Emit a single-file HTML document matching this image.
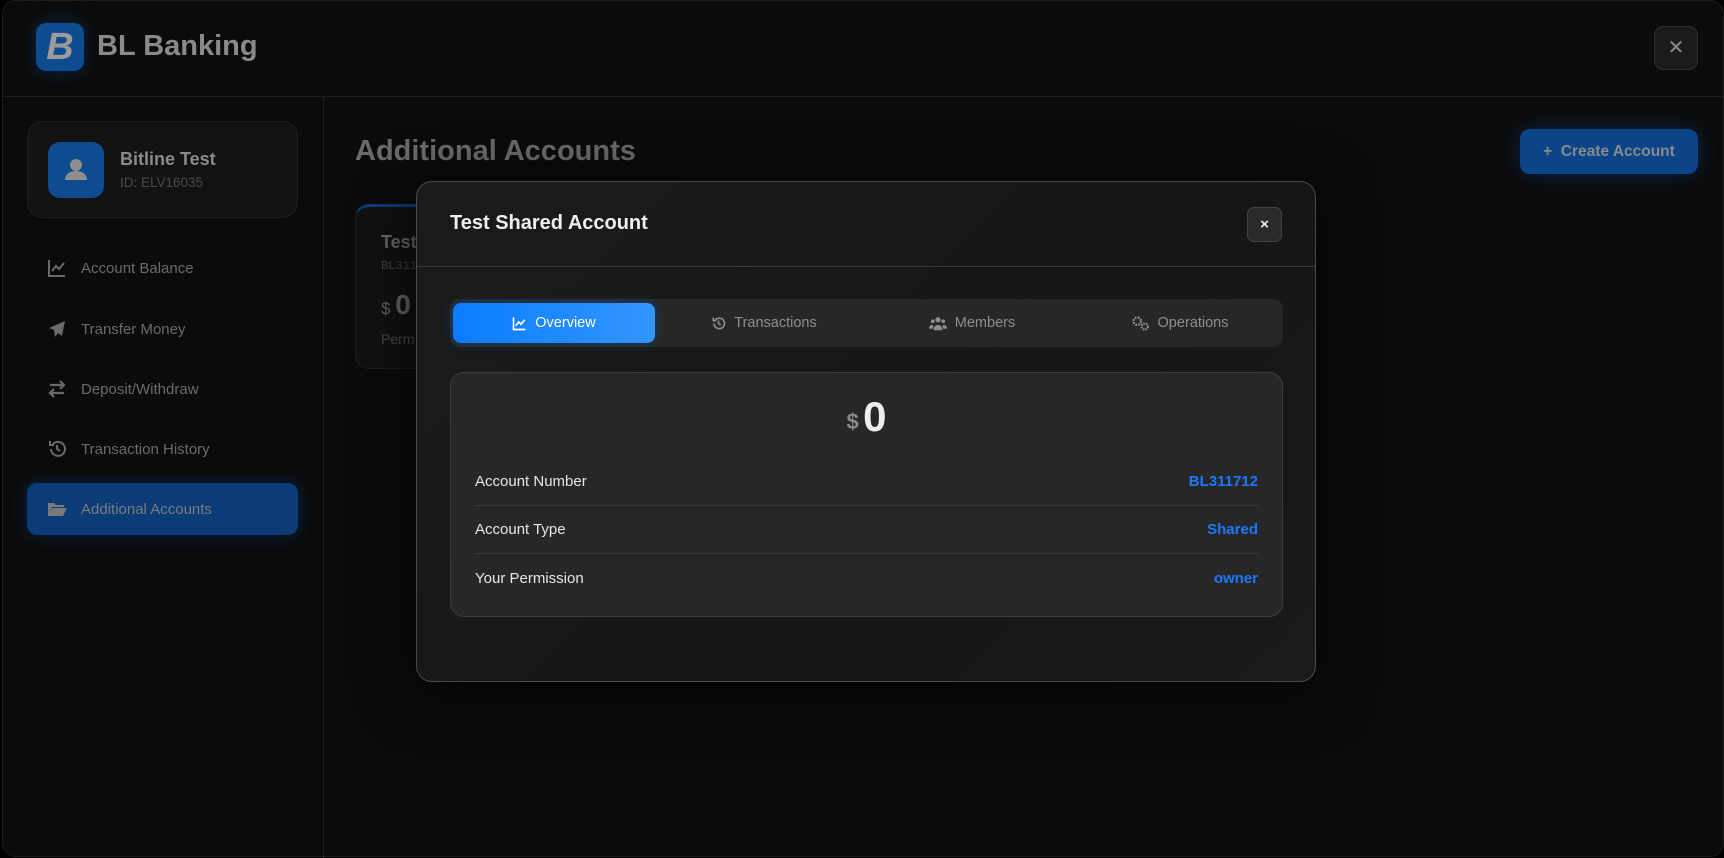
<!DOCTYPE html>
<html><head><meta charset="utf-8"><style>
*{box-sizing:border-box;margin:0;padding:0}
body{width:1724px;height:857px;background:#000;font-family:"Liberation Sans",sans-serif;position:relative;overflow:hidden}
.app{position:absolute;left:2px;top:0;width:1722px;height:857px;background:#0b0b0b;border-radius:14px;border:1px solid #1c1c1c}
.abs{position:absolute}
.hdr{left:0;top:0;width:1722px;height:96px;border-bottom:1px solid #1e1e1e}
.side{left:0;top:96px;width:321px;height:761px;border-right:1px solid #1e1e1e}
.nav{position:absolute;left:44px;font-size:15px;color:#6a6a6a;display:flex;align-items:center;gap:14px}
.nav svg{width:20px;height:20px}
.modal{left:413px;top:180px;width:900px;height:501px;border-radius:16px;border:1px solid #4a4a4a;background:linear-gradient(135deg,#1b1b1b,#161616 60%,#1a1a1a);box-shadow:0 10px 60px rgba(0,0,0,.8)}
.tab{position:absolute;top:0;height:40px;display:flex;align-items:center;justify-content:center;gap:8px;font-size:14.5px;color:#8e8e8e}
.row{position:absolute;left:24px;right:24px;height:48px;display:flex;justify-content:space-between;align-items:center;font-size:15px;color:#e6e6e6}
.row b{color:#1a7aff;font-weight:bold}
</style></head><body>
<div class="app">
  <div class="abs hdr">
    <div class="abs" style="left:33px;top:22px;width:48px;height:48px;border-radius:10px;background:#0f4b8f;box-shadow:0 0 18px rgba(20,90,180,.35);color:#9a9a9a;font:italic bold 38px 'Liberation Sans';text-align:center;line-height:48px">B</div>
    <div class="abs" style="left:94px;top:29px;font-size:29px;font-weight:bold;color:#8a8a8a">BL Banking</div>
    <div class="abs" style="left:1651px;top:25px;width:44px;height:44px;border-radius:9px;background:#1b1b1b;border:1px solid #2e2e2e;color:#8a8a8a;font-size:20px;text-align:center;line-height:42px">✕</div>
  </div>
  <div class="abs side">
    <div class="abs" style="left:24px;top:24px;width:271px;height:97px;border-radius:16px;background:#121212;border:1px solid #1f1f1f">
      <div class="abs" style="left:20px;top:20px;width:56px;height:56px;border-radius:12px;background:#0f4b8f">
        <svg width="56" height="56" viewBox="0 0 56 56"><circle cx="28" cy="23" r="6" fill="#8e8e8e"/><path d="M17 38c0-6 5-9 11-9s11 3 11 9z" fill="#8e8e8e"/></svg>
      </div>
      <div class="abs" style="left:92px;top:27px;font-size:18px;font-weight:bold;color:#8a8a8a">Bitline Test</div>
      <div class="abs" style="left:92px;top:53px;font-size:13.5px;color:#4a4a4a">ID: ELV16035</div>
    </div>
    <div class="nav" style="top:161px"><svg viewBox="0 0 20 20" fill="none" stroke="#6a6a6a" stroke-width="2"><path d="M2 2v16h16M5 13l4-5 3 3 5-6"/></svg>Account Balance</div>
    <div class="nav" style="top:222px"><svg viewBox="0 0 20 20"><path d="M18 2L2 9l5 2 1 7 3-4 4 3z" fill="#6a6a6a"/></svg>Transfer Money</div>
    <div class="nav" style="top:282px"><svg viewBox="0 0 20 20" fill="none" stroke="#6a6a6a" stroke-width="2.2"><path d="M3 6h14M13 2l4 4-4 4M17 14H3M7 10l-4 4 4 4"/></svg>Deposit/Withdraw</div>
    <div class="nav" style="top:342px"><svg viewBox="0 0 20 20" fill="none" stroke="#6a6a6a" stroke-width="2"><path d="M4 10a7 7 0 1 0 2-5M3 2v4h4M10 6v4l3 2"/></svg>Transaction History</div>
    <div class="abs" style="left:24px;top:386px;width:271px;height:52px;border-radius:10px;background:#0c3c78;box-shadow:0 0 18px rgba(10,80,170,.35)"></div>
    <div class="nav" style="top:402px;color:#7a7a7a"><svg viewBox="0 0 20 20"><path d="M1 4h6l2 2h8v2H5l-4 9z M5 9h15l-4 8H1z" fill="#7a7a7a"/></svg>Additional Accounts</div>
  </div>
  <div class="abs" style="left:352px;top:134px;font-size:29px;font-weight:bold;color:#6a6a6a">Additional Accounts</div>
  <div class="abs" style="left:1517px;top:128px;width:178px;height:45px;border-radius:10px;background:#0c4488;box-shadow:0 0 22px rgba(10,80,170,.4);color:#8a8a8a;font-size:15.5px;font-weight:bold;text-align:center;line-height:45px">+&nbsp; Create Account</div>
  <div class="abs" style="left:352px;top:203px;width:300px;height:165px;border-radius:14px;background:#111;border:1px solid #1e1e1e;border-top:3px solid #0c3c78">
    <div class="abs" style="left:25px;top:25px;font-size:18px;font-weight:bold;color:#6a6a6a">Test</div>
    <div class="abs" style="left:25px;top:52px;font:12px 'Liberation Mono';color:#444">BL311</div>
    <div class="abs" style="left:25px;top:82px;color:#666;font-size:17px">$ <span style="font-size:28px;font-weight:bold">0</span></div>
    <div class="abs" style="left:25px;top:124px;color:#4a4a4a;font-size:14px">Perm</div>
  </div>
  <div class="abs modal">
    <div class="abs" style="left:33px;top:30px;font-size:20px;font-weight:bold;color:#f0f0f0">Test Shared Account</div>
    <div class="abs" style="left:830px;top:25px;width:35px;height:35px;border-radius:7px;background:#2a2a2a;border:1px solid #444;color:#eee;font-size:15px;font-weight:bold;text-align:center;line-height:33px">×</div>
    <div class="abs" style="left:0;top:84px;width:898px;height:1px;background:#3a3a3a"></div>
    <div class="abs" style="left:33px;top:117px;width:833px;height:48px;border-radius:10px;background:#272727">
      <div class="abs" style="left:3px;top:4px;width:202px;height:40px;border-radius:8px;background:linear-gradient(90deg,#0a7cff,#3396ff);box-shadow:0 0 12px rgba(10,124,255,.3)"></div>
      <div class="tab" style="left:3px;width:202px;top:4px;color:#fff"><svg width="15" height="15" viewBox="0 0 20 20" fill="none" stroke="#fff" stroke-width="2.2"><path d="M2 2v16h16M5 13l4-5 3 3 5-6"/></svg>Overview</div>
      <div class="tab" style="left:213px;width:202px;top:4px"><svg width="15" height="15" viewBox="0 0 20 20" fill="none" stroke="#8e8e8e" stroke-width="2.2"><path d="M4 10a7 7 0 1 0 2-5M3 2v4h4M10 6v4l3 2"/></svg>Transactions</div>
      <div class="tab" style="left:421px;width:202px;top:4px"><svg width="18" height="15" viewBox="0 0 24 20"><circle cx="12" cy="5" r="3.5" fill="#8e8e8e"/><circle cx="5" cy="7" r="2.5" fill="#8e8e8e"/><circle cx="19" cy="7" r="2.5" fill="#8e8e8e"/><path d="M6 19c0-5 3-7 6-7s6 2 6 7zM0 17c0-4 2-5 5-5l1 1-1 4zM24 17c0-4-2-5-5-5l-1 1 1 4z" fill="#8e8e8e"/></svg>Members</div>
      <div class="tab" style="left:629px;width:202px;top:4px"><svg width="18" height="15" viewBox="0 0 24 20"><circle cx="7" cy="7" r="5" fill="none" stroke="#8e8e8e" stroke-width="3" stroke-dasharray="2.5 1.5"/><circle cx="17" cy="14" r="4" fill="none" stroke="#8e8e8e" stroke-width="3" stroke-dasharray="2 1.3"/></svg>Operations</div>
    </div>
    <div class="abs" style="left:33px;top:190px;width:833px;height:245px;border-radius:14px;background:#272727;border:1px solid #3c3c3c">
      <div class="abs" style="left:0;width:831px;top:20px;text-align:center;color:#eee"><span style="font-size:22px;font-weight:bold;color:#8a8a8a;vertical-align:2px">$</span> <span style="font-size:42px;font-weight:bold">0</span></div>
      <div class="row" style="top:85px;border-bottom:1px solid #3a3a3a"><span>Account Number</span><b>BL311712</b></div>
      <div class="row" style="top:133px;border-bottom:1px solid #3a3a3a"><span>Account Type</span><b>Shared</b></div>
      <div class="row" style="top:181px"><span>Your Permission</span><b>owner</b></div>
    </div>
  </div>
</div>
</body></html>
